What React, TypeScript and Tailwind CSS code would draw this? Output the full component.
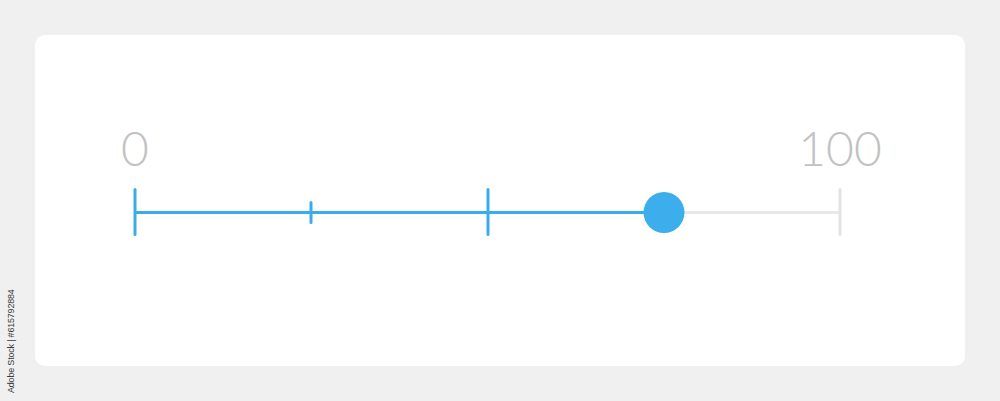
import React from "react";

const value = 75;

// Tick marks sitting on the track, as a fraction of its length
const ticks = [
  { at: 0, tall: true },
  { at: 25, tall: false },
  { at: 50, tall: true },
  { at: 100, tall: true },
];

export default function App() {
  return (
    <div className="relative h-[401px] w-[1000px] bg-[#f0f0f0] p-[35px]" style={{ fontFamily: "Lato, 'Open Sans', sans-serif" }}>
      <div className="flex h-[331px] w-[930px] flex-col rounded-[10px] bg-white pl-[100px] pt-[89px]">
        {/* Min / max labels centered on the end ticks */}
        <div className="flex w-[705px] justify-between text-[48px] font-light leading-none text-[#c2c2c2]">
          <div className="flex w-0 justify-center">
            <span>0</span>
          </div>
          <div className="flex w-0 justify-center">
            <span>100</span>
          </div>
        </div>

        {/* Slider */}
        <div className="relative mt-[16px] h-[48px] w-[705px]">
          <div className="absolute left-0 right-0 top-[23px] h-[3px] bg-[#e8e8e8]" />
          <div className="absolute left-0 top-[23px] h-[3px] bg-[#3aaceb]" style={{ width: `${value}%` }} />
          {ticks.map((t) => (
            <div
              key={t.at}
              className={`absolute w-[3px] -translate-x-1/2 rounded-full ${t.tall ? "top-0 h-[48px]" : "top-[13px] h-[23px]"} ${t.at <= value ? "bg-[#3aaceb]" : "bg-[#e3e3e3]"}`}
              style={{ left: `${t.at}%` }}
            />
          ))}
          <div
            className="absolute top-[4px] h-[41px] w-[41px] -translate-x-1/2 rounded-full bg-[#3daeec]"
            style={{ left: `${value}%` }}
          />
        </div>
      </div>

      <div className="absolute bottom-[8px] left-[16px] origin-bottom-left -rotate-90 whitespace-nowrap text-[9px] leading-none tracking-[-0.2px] text-[#3a3a3a]" style={{ fontFamily: "'Liberation Sans', sans-serif" }}>
        Adobe Stock | #615792884
      </div>
    </div>
  );
}
